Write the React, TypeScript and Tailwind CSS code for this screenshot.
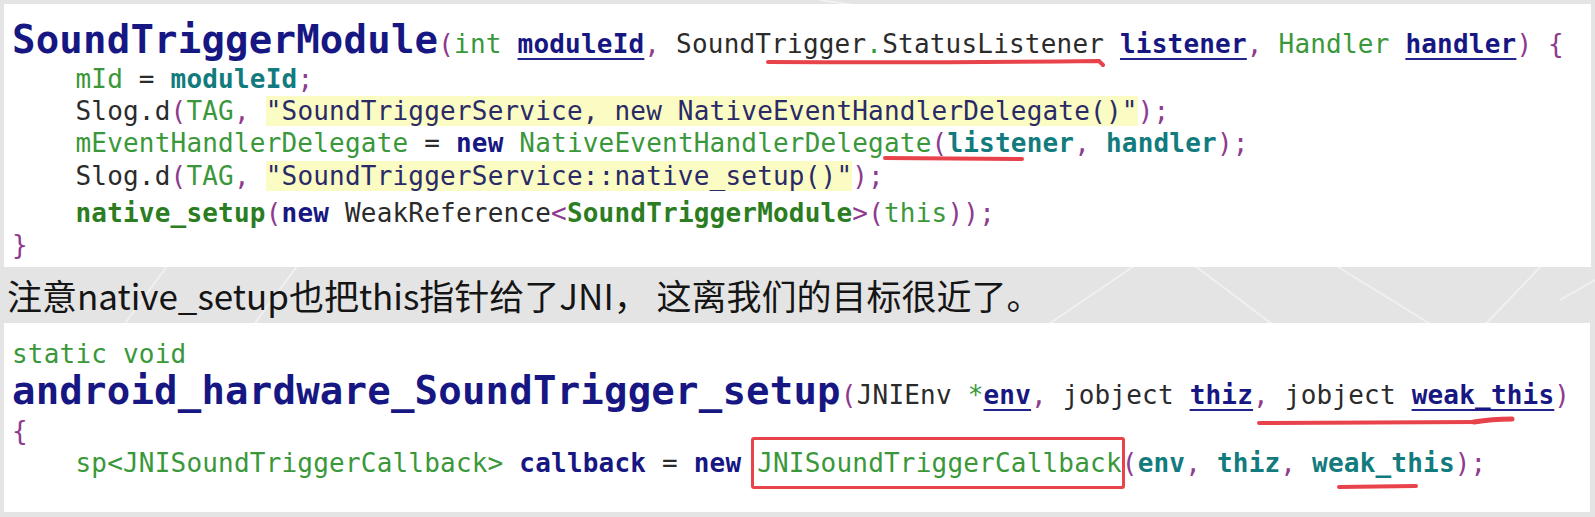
import React from "react";

// token colours, picked from the screenshot
const purple = "text-[#8e3a8e]";
const green = "text-[#3a983a]";
const dgreen = "text-[#2b7d1f] font-bold";
const navy = "text-[#171783] font-bold";
const teal = "text-[#127b7d] font-bold";
const dark = "text-[#2b2b2b]";
const str = "text-[#2a2a66] bg-[#fbfbc4]";
const param =
  "text-[#171783] font-bold underline decoration-[#23238c] decoration-[1.5px] underline-offset-[5px]";

function T({ c, children }: { c: string; children: React.ReactNode }) {
  return <span className={c}>{children}</span>;
}

function Line({ h, children }: { h: string; children: React.ReactNode }) {
  return <div className={`${h} leading-[32px] whitespace-pre`}>{children}</div>;
}

function Backdrop() {
  return (
    <svg
      className="absolute inset-0 pointer-events-none"
      width="1595"
      height="517"
      viewBox="0 0 1595 517"
    >
      <g stroke="#f4f4f4" strokeWidth="2" fill="none" opacity="0.8">
        <path d="M120 330 L170 262" />
        <path d="M250 330 L300 262" />
        <path d="M1040 330 L1140 262" />
        <path d="M1190 262 L1280 330" />
        <path d="M1330 262 L1440 330" />
        <path d="M1480 330 L1545 262" />
        <path d="M1560 300 L1595 280" />
        <path d="M820 0 L860 6" />
      </g>
    </svg>
  );
}

function Marks() {
  return (
    <svg
      className="absolute inset-0 pointer-events-none"
      width="1595"
      height="517"
      viewBox="0 0 1595 517"
    >
      <g stroke="#e8434b" strokeWidth="4" strokeLinecap="round" fill="none">
        <path d="M768 62 Q935 63 1099 61 L1103 65" />
        <path d="M885 158 L1022 159" />
        <path d="M1259 423 L1478 422" />
        <path d="M1474 422 Q1492 419 1512 419" strokeWidth="5" />
        <path d="M1339 487 L1416 486" />
      </g>
    </svg>
  );
}

export default function App() {
  return (
    <div className="relative w-[1595px] h-[517px] overflow-hidden bg-[#e4e4e4] pt-[4px] pl-[4px]">
      <Backdrop />
      <div className="relative w-[1587px] h-[263px] bg-white pt-[13px] pl-[8px] font-['DejaVu_Sans_Mono',monospace] text-[26px] tracking-[0.2px]">
        <div className="h-[46px] leading-[46px] text-[39px] whitespace-pre">
          <span className="font-bold text-[#171783]">SoundTriggerModule</span>
          <span className="text-[26px] leading-none">
            <T c={purple}>(</T>
            <T c={green}>int</T> <T c={param}>moduleId</T>
            <T c={purple}>,</T> <T c={dark}>SoundTrigger</T>
            <T c={green}>.</T>
            <T c={dark}>StatusListener</T> <T c={param}>listener</T>
            <T c={purple}>,</T> <T c={green}>Handler</T>{" "}
            <T c={param}>handler</T>
            <T c={purple}>) {"{"}</T>
          </span>
        </div>
        <Line h="h-[32px]">
          {"    "}
          <T c={green}>mId</T> <T c={dark}>=</T> <T c={teal}>moduleId</T>
          <T c={purple}>;</T>
        </Line>
        <Line h="h-[32px]">
          {"    "}
          <T c={dark}>Slog.d</T>
          <T c={purple}>(</T>
          <T c={green}>TAG</T>
          <T c={purple}>,</T>{" "}
          <T c={str}>"SoundTriggerService, new NativeEventHandlerDelegate()"</T>
          <T c={purple}>);</T>
        </Line>
        <Line h="h-[33px]">
          {"    "}
          <T c={green}>mEventHandlerDelegate</T> <T c={dark}>=</T>{" "}
          <T c={navy}>new</T> <T c={green}>NativeEventHandlerDelegate</T>
          <T c={purple}>(</T>
          <T c={teal}>listener</T>
          <T c={purple}>,</T> <T c={teal}>handler</T>
          <T c={purple}>);</T>
        </Line>
        <Line h="h-[37px]">
          {"    "}
          <T c={dark}>Slog.d</T>
          <T c={purple}>(</T>
          <T c={green}>TAG</T>
          <T c={purple}>,</T>{" "}
          <T c={str}>"SoundTriggerService::native_setup()"</T>
          <T c={purple}>);</T>
        </Line>
        <Line h="h-[32px]">
          {"    "}
          <T c={dgreen}>native_setup</T>
          <T c={purple}>(</T>
          <T c={navy}>new</T> <T c={dark}>WeakReference</T>
          <T c={purple}>{"<"}</T>
          <T c={dgreen}>SoundTriggerModule</T>
          <T c={purple}>{">("}</T>
          <T c={green}>this</T>
          <T c={purple}>));</T>
        </Line>
        <Line h="h-[32px]">
          <T c={purple}>{"}"}</T>
        </Line>
      </div>

      <div className="relative h-[56px] flex items-center pl-[3px] text-[35px] text-[#151515] font-['Noto_Sans_CJK_SC',sans-serif] whitespace-pre">
        注意native_setup也把this指针给了JNI， 这离我们的目标很近了。
      </div>

      <div className="relative w-[1586px] h-[189px] bg-white pt-[15px] pl-[8px] font-['DejaVu_Sans_Mono',monospace] text-[26px] tracking-[0.2px]">
        <Line h="h-[30px]">
          <T c={green}>static void</T>
        </Line>
        <div className="h-[47px] leading-[46px] text-[39px] whitespace-pre">
          <span className="font-bold text-[#171783]">
            android_hardware_SoundTrigger_setup
          </span>
          <span className="text-[26px] leading-none">
            <T c={purple}>(</T>
            <T c={dark}>JNIEnv</T> <T c={green}>*</T>
            <T c={param}>env</T>
            <T c={purple}>,</T> <T c={dark}>jobject</T> <T c={param}>thiz</T>
            <T c={purple}>,</T> <T c={dark}>jobject</T>{" "}
            <T c={param}>weak_this</T>
            <T c={purple}>)</T>
          </span>
        </div>
        <Line h="h-[32px]">
          <T c={purple}>{"{"}</T>
        </Line>
        <Line h="h-[32px]">
          {"    "}
          <T c={green}>sp&lt;JNISoundTriggerCallback&gt;</T>{" "}
          <T c={navy}>callback</T> <T c={dark}>=</T> <T c={navy}>new</T>{" "}
          <span className="border-[3px] border-[#e8434b] rounded-[3px] py-[8px] pl-[3px] -ml-[6px] -mr-[3px]">
            <T c={green}>JNISoundTriggerCallback</T>
          </span>
          <T c={purple}>(</T>
          <T c={teal}>env</T>
          <T c={purple}>,</T> <T c={teal}>thiz</T>
          <T c={purple}>,</T> <T c={teal}>weak_this</T>
          <T c={purple}>);</T>
        </Line>
      </div>

      <Marks />
    </div>
  );
}
